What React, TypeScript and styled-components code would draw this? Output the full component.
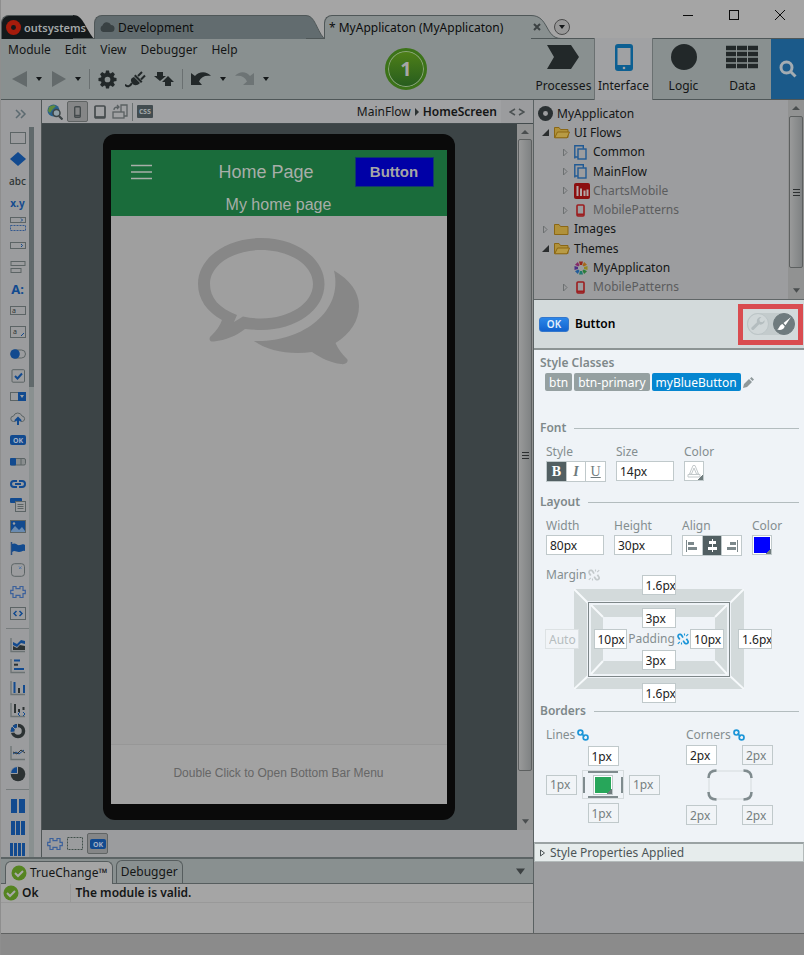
import React from "react";
import styled, { createGlobalStyle } from "styled-components";

const GlobalStyle = createGlobalStyle`
  *, *::before, *::after { box-sizing: border-box; }
  body { margin: 0; background: #8b8b8b; }
  body, button, input, table { font-family: "Noto Sans", "Open Sans", sans-serif; font-size: 12px; line-height: 16px; color: #141616; }
  button { border: 0; padding: 0; margin: 0; background: none; cursor: pointer; white-space: nowrap; }
  svg { display: block; flex: none; }
  h2, h3, ul { margin: 0; padding: 0; font-size: 12px; list-style: none; }
  h2, h3, strong { font-weight: 600; }
`;

const c = {
  title: "#a5a5a5",
  bar: "#899090",
  line: "#4f5758",
  light: "#a0a1a3",
  pane: "#9b9c9e",
  ink: "#222829",
  blue: "#124a8f",
  grey: "#5c6465",
  label: "#848e90",
  field: "#c0c9cb",
};

/* ---------- frame ---------- */
const Window = styled.div`
  min-height: 100vh;
  display: flex;
  flex-direction: column;
  border-left: 1px solid #8e8e8e;
  background: ${c.title};
`;
const TitleBar = styled.header`
  display: flex;
  align-items: flex-end;
  height: 38px;
  background: ${c.title};
`;
const Tab = styled.button<{ $bg: string; $w: number; $fg?: string }>`
  height: 24px;
  width: ${(p) => p.$w}px;
  margin-bottom: -1px;
  display: flex;
  align-items: center;
  gap: 3px;
  padding-left: 4px;
  border: 1px solid ${c.line};
  border-right: 0;
  border-bottom: 0;
  border-radius: 8px 0 0 0;
  background: ${(p) => p.$bg};
  color: ${(p) => p.$fg || "#0c0d0d"};
  position: relative;
  z-index: 1;
`;
const Cap = styled.svg`
  margin-bottom: -1px;
`;
const Brand = styled.span`
  font-weight: 600;
  font-size: 11px;
  line-height: 16px;
`;
const CloseTab = styled.button`
  width: 10px;
  height: 20px;
  margin: 0 -12px 1px 2px;
  z-index: 1;
`;
const Round = styled.button`
  width: 16px;
  height: 16px;
  margin: 0 0 3px -7px;
  border: 1px solid #4a4a4a;
  border-radius: 50%;
  background: #989898;
  display: grid;
  place-items: center;
`;
const Controls = styled.div`
  margin-left: auto;
  align-self: flex-start;
  display: flex;
  gap: 35px;
  padding: 9px 18px 0 0;
`;
const Head = styled.div`
  display: flex;
  background: ${c.bar};
  border-top: 1px solid ${c.line};
  border-bottom: 1px solid ${c.line};
  height: 62px;
  position: relative;
`;
const Commands = styled.div`
  flex: 1;
  min-width: 0;
`;
const Menu = styled.nav`
  display: flex;
  gap: 14px;
  padding: 3px 0 0 7px;
`;
const Tools = styled.div`
  display: flex;
  align-items: center;
  height: 40px;
  padding: 2px 0 0 11px;
  gap: 8px;
`;
const Sep = styled.i<{ $h: number }>`
  width: 1px;
  height: ${(p) => p.$h}px;
  background: #6a7071;
`;
const Step = styled.span`
  position: absolute;
  left: 384px;
  top: 9px;
  width: 42px;
  height: 42px;
  border-radius: 50%;
  border: 3px solid #3c7319;
  background: linear-gradient(#4f8018, #265c1e);
  box-shadow: inset 0 0 0 1px #8ba67c;
  color: #a6a6a6;
  font-weight: 700;
  font-size: 20px;
  line-height: 35px;
  text-align: center;
`;
const Areas = styled.nav`
  display: flex;
  width: 271px;
`;
const Area = styled.button<{ $on?: boolean; $w: number }>`
  width: ${(p) => p.$w}px;
  display: flex;
  flex-direction: column;
  align-items: center;
  justify-content: space-between;
  background: ${(p) => (p.$on ? c.light : "transparent")};
  margin: ${(p) => (p.$on ? "-1px 0" : "0")};
  padding-top: ${(p) => (p.$on ? 6 : 5)}px;
  padding-bottom: ${(p) => (p.$on ? 6 : 5)}px;
  border-left: ${(p) => (p.$on ? "1px solid #6a7071" : "0")};
  border-right: ${(p) => (p.$on ? "1px solid #6a7071" : "0")};
`;
const Search = styled.button`
  width: 33px;
  background: #1b5a8a;
  display: grid;
  place-items: center;
`;
const Body = styled.div`
  flex: 1;
  display: grid;
  grid-template-columns: minmax(0, 1fr) 271px;
`;
const Status = styled.footer`
  height: 22px;
  background: #8b8b8b;
  border-top: 1px solid #606262;
`;

/* ---------- left ---------- */
const Left = styled.div`
  display: flex;
  flex-direction: column;
  min-width: 0;
`;
const Workspace = styled.div`
  flex: 1;
  display: flex;
  min-height: 0;
`;
const Toolbox = styled.aside`
  width: 41px;
  display: flex;
  flex-direction: column;
  background: ${c.pane};
  border-right: 1px solid #505657;
`;
const Expand = styled.button`
  height: 27px;
  padding-left: 14px;
`;
const ToolScroll = styled.div`
  flex: 1;
  display: flex;
  overflow: hidden;
  padding-left: 5px;
`;
const ToolList = styled.div`
  width: 23px;
  display: flex;
  flex-direction: column;
  margin-bottom: -3px;
`;
const Tool = styled.button`
  flex: 1;
  min-height: 18px;
  display: grid;
  place-items: center;
`;
const Rule = styled.i`
  height: 1px;
  margin: 4px 0 5px;
  background: #777c7d;
`;
const ToolTrack = styled.div`
  width: 5px;
  background: #899090;
`;
const ToolThumb = styled.div`
  height: 260px;
  background: #60696b;
`;
const Stage = styled.div`
  flex: 1;
  min-width: 0;
  display: flex;
  flex-direction: column;
`;
const ViewBar = styled.div`
  height: 24px;
  display: flex;
  align-items: center;
  padding-left: 5px;
  gap: 4px;
  background: ${c.light};
  border-bottom: 1px solid #434b4d;
`;
const ElementBar = styled.div`
  height: 27px;
  display: flex;
  align-items: center;
  padding-left: 5px;
  gap: 4px;
  background: ${c.pane};
`;
const Toggle = styled.button<{ $on?: boolean }>`
  width: ${(p) => (p.$on ? 21 : 16)}px;
  height: 21px;
  display: grid;
  place-items: center;
  border-radius: 2px;
  border: ${(p) => (p.$on ? "1px solid #606464" : "0")};
  background: ${(p) => (p.$on ? "#858687" : "transparent")};
`;
const Crumbs = styled.div`
  margin-left: auto;
  display: flex;
  align-items: center;
  gap: 4px;
`;
const Code = styled.button`
  width: 32px;
  height: 23px;
  background: ${c.pane};
  display: grid;
  place-items: center;
`;
const Canvas = styled.div`
  flex: 1;
  display: flex;
  background: #3c4446;
`;
const Board = styled.main`
  flex: 1;
  display: flex;
  justify-content: center;
  padding: 10px 0;
`;
const Phone = styled.div`
  width: 352px;
  margin-right: 2px;
  display: flex;
  padding: 16px 8px;
  background: #0a0a0a;
  border-radius: 12px;
`;
const Screen = styled.div`
  flex: 1;
  display: flex;
  flex-direction: column;
  align-items: stretch;
  background: #9f9f9f;
  font-family: "Liberation Sans", Arial, sans-serif;
`;
const AppHead = styled.div`
  background: #1a6c3b;
  color: #a8aea9;
  height: 66px;
`;
const AppTop = styled.div`
  display: grid;
  grid-template-columns: 21px 1fr auto;
  align-items: center;
  padding: 7px 13px 0 20px;
  font-size: 18px;
  line-height: 30px;
  column-gap: 24px;
`;
const AppTitle = styled.span`
  text-align: center;
  padding-left: 26px;
`;
const AppButton = styled.button`
  justify-self: end;
  width: 79px;
  height: 30px;
  background: #0000a6;
  border: 1px solid #123a6c;
  color: #a6a6a6;
  font: bold 15px/28px "Liberation Sans", Arial, sans-serif;
`;
const AppSub = styled.div`
  text-align: center;
  font-size: 16px;
  line-height: 18px;
  margin-top: 9px;
`;
const AppBody = styled.div`
  flex: 1;
  display: flex;
  justify-content: center;
  padding-top: 22px;
`;
const AppFoot = styled.div`
  height: 60px;
  border-top: 1px solid #979797;
  background: #a2a2a2;
  color: #666;
  text-align: center;
  font-size: 12px;
  line-height: 57px;
`;
const Track = styled.div`
  width: 16px;
  display: flex;
  flex-direction: column;
  align-items: center;
  justify-content: space-between;
  background: #919292;
  padding: 6px 0;
`;
const Thumb = styled.div<{ $top: number; $bottom: number }>`
  flex: 1;
  align-self: stretch;
  margin: ${(p) => p.$top}px 1px ${(p) => p.$bottom}px;
  border: 1px solid #5d6060;
  border-radius: 2px;
  background: linear-gradient(90deg, #999a9a, #7f8283);
  display: grid;
  place-items: center;
`;
const Bottom = styled.div`
  background: ${c.bar};
  border-top: 2px solid #5c6465;
`;
const BottomTabs = styled.div`
  display: flex;
  align-items: flex-end;
  height: 25px;
  padding: 0 8px 0 4px;
  gap: 3px;
  border-bottom: 1px solid #565d5e;
`;
const BottomTab = styled.button<{ $on?: boolean }>`
  height: 23px;
  padding: 0 4px 0 ${(p) => (p.$on ? 5 : 4)}px;
  display: flex;
  align-items: center;
  gap: 3px;
  border: 1px solid #565d5e;
  border-bottom: 0;
  border-radius: 6px 6px 0 0;
  background: ${(p) => (p.$on ? c.title : c.bar)};
  margin-bottom: ${(p) => (p.$on ? -1 : 0)}px;
`;
const Collapse = styled.button`
  margin: 0 0 8px auto;
`;
const Results = styled.div`
  height: 49px;
  background: ${c.title};
`;
const Messages = styled.table`
  border-collapse: collapse;
  width: 100%;
  border-bottom: 1px solid #999;
  td { padding: 0 0 0 2px; height: 18px; font-weight: 600; }
  td + td { border-left: 1px solid #999; padding-left: 5px; }
  td:first-child { width: 69px; }
`;
const State = styled.span`
  display: flex;
  align-items: center;
  gap: 3px;
`;

/* ---------- right ---------- */
const Right = styled.div`
  display: flex;
  flex-direction: column;
  background: #9c9d9f;
  border-left: 1px solid #5a6162;
`;
const TreePane = styled.div`
  height: 199px;
  display: flex;
  background: #9c9d9f;
`;
const Tree = styled.ul`
  flex: 1;
  display: flex;
  flex-direction: column;
  padding: 4px 0 2px;
`;
const Node = styled.li<{ $depth: number; $dim?: boolean }>`
  flex: 1;
  display: flex;
  align-items: center;
  padding-left: ${(p) => [4, 8, 28][p.$depth]}px;
  color: ${(p) => (p.$dim ? "#5b5c5d" : "#141616")};
`;
const Twist = styled.button`
  width: 12px;
  height: 16px;
  display: grid;
  align-items: center;
`;
const NodeIcon = styled.span<{ $w: number }>`
  width: ${(p) => p.$w}px;
`;
const Selected = styled.div`
  height: 51px;
  display: flex;
  align-items: center;
  padding: 0 0 0 5px;
  background: #d3dadb;
  border-top: 1px solid #606667;
  border-bottom: 2px solid #8c9494;
  color: #000;
`;
const OkBadge = styled.span`
  width: 30px;
  height: 15px;
  margin-right: 6px;
  border-radius: 3px;
  background: linear-gradient(#2b86e8, #1263cf);
  border: 1px solid #3377cc;
  color: #e4effb;
  font-weight: 600;
  font-size: 10px;
  line-height: 13px;
  text-align: center;
`;
const Marked = styled.div`
  margin-left: auto;
  margin-right: 1px;
  border: 5px solid #d94c50;
  width: 65px;
  height: 41px;
  display: grid;
  place-items: center;
`;
const Mode = styled.div`
  display: flex;
  justify-content: space-between;
  width: 48px;
  border-radius: 12px;
  background: #c3cbcc;
`;
const ModeButton = styled.button<{ $on?: boolean }>`
  width: 22px;
  height: 22px;
  border-radius: 50%;
  display: grid;
  place-items: center;
  border: 1px solid ${(p) => (p.$on ? "#6f7b7e" : "#bcc5c7")};
  background: ${(p) => (p.$on ? "#6f7b7e" : "#d0d7d8")};
`;
const Styles = styled.section`
  background: #eff3f7;
  color: ${c.label};
  padding: 5px 5px 0 6px;
`;
const Heading = styled.h3<{ $line?: boolean }>`
  display: flex;
  align-items: center;
  gap: 8px;
  color: #7e888a;
  line-height: 16px;
  &::after { content: ""; flex: 1; height: 1px; background: ${(p) => (p.$line ? "#b3bcbe" : "transparent")}; }
`;
const Tags = styled.div`
  display: flex;
  align-items: center;
  gap: 2px;
  padding: 2px 0 29px 5px;
`;
const Tag = styled.button<{ $on?: boolean }>`
  height: 18px;
  padding: 0 4px;
  border-radius: 2px;
  color: #fff;
  line-height: 17px;
  background: ${(p) => (p.$on ? "#0586d0" : "#95a0a1")};
`;
const Fields = styled.div`
  display: flex;
  gap: 10px;
  padding: 8px 0 12px 6px;
`;
const Field = styled.div`
  display: flex;
  flex-direction: column;
  gap: 1px;
  color: ${c.label};
`;
const Box = styled.input<{ $w: number; $off?: boolean; $faint?: boolean }>`
  width: ${(p) => p.$w}px;
  height: 20px;
  padding: 0 0 0 3px;
  border: 1px solid ${(p) => (p.$faint ? "#dde2e4" : c.field)};
  border-radius: 0;
  background: ${(p) => (p.$off ? "#f1f4f7" : "#fff")};
  color: ${(p) => (p.$faint ? "#b6bdbf" : p.$off ? "#767f81" : "#222")};
  outline: 0;
`;
const Group = styled.div`
  display: flex;
  width: 60px;
  height: 21px;
  border: 1px solid ${c.field};
  background: #fff;
`;
const GroupButton = styled.button<{ $on?: boolean }>`
  flex: 1;
  display: grid;
  place-items: center;
  background: ${(p) => (p.$on ? "#525f62" : "#fff")};
  color: ${(p) => (p.$on ? "#fff" : "#6f7b7d")};
  & + & { border-left: 1px solid ${c.field}; }
`;
const Letter = styled.span<{ $kind: "b" | "i" | "u" }>`
  font: ${(p) => (p.$kind === "b" ? "bold" : p.$kind === "i" ? "italic bold" : "normal")} 14px/16px "Liberation Serif", serif;
  text-decoration: ${(p) => (p.$kind === "u" ? "underline" : "none")};
`;
const Swatch = styled.button<{ $color: string }>`
  width: 20px;
  height: 20px;
  border: 1px solid ${c.field};
  padding: 1px;
  background: linear-gradient(315deg, #6f7b7d 4px, transparent 4px), linear-gradient(${(p) => p.$color}, ${(p) => p.$color}) content-box, #fff;
  display: grid;
  place-items: center;
`;
const LinkLabel = styled.div`
  display: flex;
  align-items: center;
  gap: 2px;
`;
const Spacing = styled.div`
  display: grid;
  grid-template-columns: 34px 14px 34px 63px 34px 14px 34px;
  grid-template-rows: 20px 13px 20px 22px 20px 13px 20px;
  align-items: center;
  justify-items: center;
  margin: 7px 0 0 5px;
`;
const Backdrop = styled.svg`
  grid-area: 1 / 1 / -1 / -1;
`;
const Cell = styled.div<{ $row: number; $col: number }>`
  grid-row: ${(p) => p.$row};
  grid-column: ${(p) => p.$col};
  z-index: 1;
  display: flex;
  align-items: center;
  gap: 2px;
`;
const MarginLabel = styled(LinkLabel)`
  grid-row: 1;
  grid-column: 1 / span 4;
  justify-self: start;
  align-self: start;
  margin: -8px 0 0 1px;
`;
const BorderRow = styled.div`
  display: flex;
  padding: 8px 0 17px 6px;
  gap: 26px;
`;
const Lines = styled.div`
  display: grid;
  grid-template-columns: 31px 42px 31px;
  grid-template-rows: 20px 29px 20px;
  gap: 4px 5px;
  place-items: center;
  margin: 3px 0 0 0;
`;
const LineBox = styled.div`
  width: 42px;
  height: 29px;
  grid-row: 2;
  grid-column: 2;
  display: grid;
  place-items: center;
  border: 1px solid #d5dbdd;
  background:
    linear-gradient(#7f8b8e, #7f8b8e) top / 30px 2px no-repeat,
    linear-gradient(#7f8b8e, #7f8b8e) bottom / 30px 2px no-repeat,
    linear-gradient(#7f8b8e, #7f8b8e) left / 2px 16px no-repeat,
    linear-gradient(#7f8b8e, #7f8b8e) right / 2px 16px no-repeat;
`;
const Corners = styled.div`
  display: grid;
  grid-template-columns: 31px 25px 31px;
  grid-template-rows: 20px 40px 20px;
  place-items: center;
  margin-top: 2px;
`;
const Applied = styled.button`
  display: flex;
  align-items: center;
  gap: 5px;
  height: 20px;
  padding-left: 5px;
  background: #e6ecec;
  border: 1px solid #b3baba;
  border-top: 2px solid #9aa2a3;
  color: #4c5557;
`;

/* ---------- icons ---------- */
const Caret = ({ color = "#15181a", w = 6 }: { color?: string; w?: number }) => (
  <svg width={w} height={w - 2} viewBox="0 0 6 4" fill={color}><path d="M0 0h6L3 4z" /></svg>
);
const UpCaret = () => <svg width="8" height="4" viewBox="0 0 8 4" fill="#4a4e4f"><path d="M0 4h8L4 0z" /></svg>;
const Check = ({ size = 16 }: { size?: number }) => (
  <svg width={size} height={size} viewBox="0 0 16 16"><circle cx="8" cy="8" r="7.5" fill="#558421" /><path d="M4 8l3 3 5-5" fill="none" stroke="#a9a9a9" strokeWidth="2" /></svg>
);
const Gear = () => (
  <svg width="19" height="19" viewBox="-10 -10 20 20" fill={c.ink}>
    {[0, 45, 90, 135, 180, 225, 270, 315].map((a) => <path key={a} d="M-2.4 -5.5L-1.6 -9.5H1.6L2.4 -5.5z" transform={`rotate(${a})`} />)}
    <circle r="5" fill="none" stroke={c.ink} strokeWidth="4" />
  </svg>
);
const Chain = ({ broken, color = "#1b95d8" }: { broken?: boolean; color?: string }) => (
  <svg width="12" height="12" viewBox="0 0 12 12" fill="none" stroke={color} strokeWidth="1.7">
    {broken ? (
      <>
        <path d="M6 4.6L4.600 2.300A1.900 1.900 0 0 0 1.300 4.200L2.800 6.400M6.200 7.600l1.300 2.200a1.900 1.900 0 0 0 3.300-1.900L9.400 5.700" />
        <path d="M7.500.5v2M9.200 3.200l2-2M.8 10.800l2-2M4.500 9.500v2" strokeWidth="1.100" />
      </>
    ) : (
      <>
        <circle cx="3.400" cy="3.600" r="2.400" /><circle cx="8.600" cy="8.400" r="2.400" /><path d="M4.400 4.600l3.200 2.800" />
      </>
    )}
  </svg>
);
const I = ({ children, h = 16 }: { children: React.ReactNode; h?: number }) => (
  <svg width="16" height={h} viewBox={`0 0 16 ${h}`} fill="none" stroke={c.grey}>{children}</svg>
);
const Axis = () => <path d="M1 1v13.5h14" stroke="#6c7374" strokeWidth="1.3" />;
const Sign = styled.span<{ $size: number; $color: string; $bold?: boolean }>`
  font-size: ${(p) => p.$size}px;
  line-height: 16px;
  font-weight: ${(p) => (p.$bold ? 700 : 500)};
  color: ${(p) => p.$color};
`;
const Puzzle = () => (
  <svg width="16" height="14" viewBox="0 0 16 14" fill="none" stroke="#3c619b" strokeWidth="1.200">
    <path d="M3 1.500h3v2.200h4V1.500h3v3.800h2.300v3.400H13v3.800h-3v-2.200H6v2.200H3V8.700H.7V5.300H3z" />
  </svg>
);
const OkIcon = () => (
  <svg width="16" height="10" viewBox="0 0 16 10"><rect width="16" height="10" rx="2" fill={c.blue} /><text x="8" y="7.600" fontSize="7" fontWeight="700" textAnchor="middle" fill="#a2b0c4">OK</text></svg>
);
const blueFill = { fill: c.blue, stroke: "none" };
const inkFill = { fill: "#2c3233", stroke: "none" };

const tools: [string, React.ReactNode][] = [
  ["Container", <I h={12}><rect x=".5" y=".5" width="15" height="11" /></I>],
  ["If", <I h={14}><path d="M8 0l8 7-8 7-8-7z" {...blueFill} /></I>],
  ["Text", <Sign $size={10} $color="#2e3435">abc</Sign>],
  ["Expression", <Sign $size={10} $color={c.blue} $bold>x.y</Sign>],
  ["List", <I><rect x=".5" y="1.500" width="15" height="5" /><path d="M11 2.500l1.500 1.500L11 5.500" stroke={c.blue} /><rect x=".5" y="9.500" width="15" height="5" stroke="#33588f" strokeDasharray="2 1" /></I>],
  ["List Item", <I h={8}><rect x=".5" y=".5" width="15" height="6" /><path d="M11 2l1.500 1.500L11 5" stroke={c.blue} /></I>],
  ["Form", <I h={12}><rect x="1" y=".5" width="14" height="4" /><rect x="1" y="7.500" width="10" height="4" /></I>],
  ["Label", <Sign $size={13} $color={c.blue} $bold>A:</Sign>],
  ["Input", <I h={10}><rect x=".5" y=".5" width="15" height="8" /><text x="2" y="7" fontSize="7" fill="#2e3435" stroke="none">a</text></I>],
  ["Text Area", <I h={12}><rect x=".5" y=".5" width="15" height="11" /><text x="3" y="8" fontSize="7" fill="#2e3435" stroke="none">a</text><path d="M11 10l3-3" stroke={c.blue} /></I>],
  ["Switch", <I h={10}><rect x="1" y="1" width="14.500" height="8" rx="4" /><circle cx="5" cy="5" r="4.800" {...blueFill} /></I>],
  ["Checkbox", <I h={14}><rect x="2" y=".7" width="12.500" height="12.500" rx="1" /><path d="M5 7l2.500 2.500L12 4.500" stroke={c.blue} strokeWidth="2" /></I>],
  ["Dropdown", <I h={10}><rect x=".5" y=".5" width="15" height="8" /><rect x="8" width="8" height="9" {...blueFill} /><path d="M10 3h4l-2 3z" fill="#a0a1a3" stroke="none" /></I>],
  ["Upload", <I h={14}><path d="M5 9.500H3.500a2.700 2.700 0 0 1 0-5.400A4.500 4.500 0 0 1 12 4a2.800 2.800 0 0 1 .5 5.500H11" /><path d="M8 13V6M5 9l3-3 3 3" stroke={c.blue} strokeWidth="2" /></I>],
  ["Button", <OkIcon />],
  ["Button Group", <I h={8}><rect x=".5" y=".5" width="15" height="6.500" rx="1.500" fill="#898d8e" /><rect width="6" height="7.500" rx="1" {...blueFill} /><path d="M11 1v6" /></I>],
  ["Link", <I h={10}><g stroke={c.blue} strokeWidth="2"><path d="M7 2H4a3 3 0 0 0 0 6h3M9 2h3a3 3 0 0 1 0 6H9M5 5h6" /></g></I>],
  ["Popover Menu", <I h={14}><rect width="12" height="5" rx="1" {...blueFill} /><rect x="5.500" y="3.500" width="10" height="10" fill="#9b9c9e" /><path d="M7.500 6.500h6M7.500 8.500h6M7.500 10.500h6" strokeWidth="1" /></I>],
  ["Image", <I h={13}><rect x=".5" y=".5" width="15" height="12" /><rect x="1" y="1" width="14" height="11" {...blueFill} /><path d="M1 11l4-5 4 4 3-3 3 4v1H1z" fill="#6a8bb0" stroke="none" /><circle cx="4" cy="3.500" r="1.200" fill="#a0a1a3" stroke="none" /></I>],
  ["Flag", <I h={14}><path d="M1.500 1v13" stroke="#2a4f80" strokeWidth="1.500" /><path d="M2 3c4-2 5 2 8 1s4-1 5 0v6c-3-1-3 1-6 1s-4-2-7 0z" {...blueFill} /></I>],
  ["Block", <I h={14}><rect x="1.500" y=".7" width="13" height="12.600" rx="3" /><path d="M9 3.500l2.500 2.500M11.500 3.500L9 6" stroke="#5277a8" /></I>],
  ["Extension", <Puzzle />],
  ["HTML", <I h={13}><rect x=".5" y=".5" width="15" height="12" /><path d="M6.500 4L4 6.500 6.500 9M9.500 4L12 6.500 9.500 9" stroke={c.blue} strokeWidth="1.500" /></I>],
  ["-", null],
  ["Area Chart", <I><Axis /><path d="M3 13V9l4 2 3-3 5 1v4z" {...inkFill} /><path d="M3 5l4 2 4-4 4 1v3l-4-1-4 4-4-2z" {...blueFill} /></I>],
  ["Bar Chart", <I><Axis /><path d="M4 2.500h6M4 11h10" stroke={c.blue} strokeWidth="2" /><path d="M4 6.700h4" stroke="#2c3233" strokeWidth="2" /></I>],
  ["Column Chart", <I><Axis /><path d="M4.500 2v11M14 5v8" stroke={c.blue} strokeWidth="2" /><path d="M9 8v5" stroke="#2c3233" strokeWidth="2" /></I>],
  ["Custom Chart", <I><Axis /><path d="M5 2v9M9 7v3M13.500 5v3" stroke="#2c3233" strokeWidth="2" /><path d="M10 10l-2 2 2 2M13 10l2 2-2 2" stroke={c.blue} /></I>],
  ["Donut Chart", <I><circle cx="8" cy="8" r="5.500" stroke="#2c3233" strokeWidth="3.500" /><path d="M2.600 9A5.500 5.500 0 0 1 7 2.600" stroke={c.blue} strokeWidth="3.500" /><path d="M0 9.500l5-.5M7.500 0v5M2 3l3 3" stroke="#9b9c9e" /></I>],
  ["Line Chart", <I><Axis /><path d="M3 9l3-2 3 2 5-4" stroke={c.blue} /><path d="M3 7l4 2 4-4 4 3" stroke="#2c3233" /></I>],
  ["Pie Chart", <I><circle cx="8" cy="8" r="7.300" {...inkFill} /><path d="M7.500 7.500H.5A7 7 0 0 1 7.500.5z" fill={c.blue} stroke="#9b9c9e" /></I>],
  ["-", null],
  ["Columns 2", <I h={14}><path d="M1 0h6v14H1zM9 0h6v14H9z" {...blueFill} /></I>],
  ["Columns 3", <I h={14}><path d="M1 0h4v14H1zM6 0h4v14H6zM11 0h4v14h-4z" {...blueFill} /></I>],
  ["Columns 4", <I h={14}><path d="M0 1h3v13H0zM4 1h3v13H4zM8 1h3v13H8zM12 1h3v13h-3z" {...blueFill} /></I>],
];

const Ring = ({ color = "#2a3032", hole = "#9c9d9f" }: { color?: string; hole?: string }) => (
  <svg width="15" height="15" viewBox="0 0 14 14"><circle cx="7" cy="7" r="7" fill={color} /><circle cx="7" cy="7" r="2.300" fill={hole} /></svg>
);
const Folder = ({ open }: { open?: boolean }) => (
  <svg width="16" height="13" viewBox="0 0 16 13" fill="#b0913a" stroke="#8b6714">
    <path d="M.5 11.500v-10h4.500l1.500 2h7.500v8z" />
    {open && <path d="M.7 11.800L3.500 6h12l-2.500 5.800z" fill="#b89b45" />}
  </svg>
);
const Flow = () => (
  <svg width="13" height="15" viewBox="0 0 13 15" fill="#9c9d9f" stroke="#215a94" strokeWidth="1.400"><path d="M.8 13.500V.8h8.500v3M.8 12h3" /><rect x="4" y="4" width="8" height="10" /></svg>
);
const Charts = () => (
  <svg width="16" height="16" viewBox="0 0 16 16"><rect width="16" height="16" rx="2" fill="#8c0f10" /><path d="M3.500 3v10M7 5.500V13M10.500 7.500V13M13.500 6.500V13" stroke="#b4a6a6" strokeWidth="2" /></svg>
);
const Mobile = () => (
  <svg width="13" height="13" viewBox="-2 0 13 13"><rect x="1" y="1" width="7" height="11" rx="1" fill="#9c9d9f" stroke="#9c1d1f" strokeWidth="1.600" /><path d="M1 10.500h7" stroke="#9c1d1f" strokeWidth="2" /></svg>
);
const Wheel = () => (
  <svg width="14" height="14" viewBox="-7 -7 14 14">
    {["#97251c", "#a5681b", "#938a23", "#2d7c39", "#1f7a6e", "#225c99", "#4b2f86", "#862a68"].map((f, i) => (
      <path key={f} d="M-2 -6.500L2 -6.500L1 -3H-1z" fill={f} transform={`rotate(${i * 45})`} />
    ))}
  </svg>
);
const tree: { t: string; d: number; i: React.ReactNode; w: number; open?: boolean; leaf?: boolean; dim?: boolean }[] = [
  { t: "MyApplicaton", d: 0, i: <Ring />, w: 19, leaf: true },
  { t: "UI Flows", d: 1, i: <Folder open />, w: 20, open: true },
  { t: "Common", d: 2, i: <Flow />, w: 19 },
  { t: "MainFlow", d: 2, i: <Flow />, w: 19 },
  { t: "ChartsMobile", d: 2, i: <Charts />, w: 19, dim: true },
  { t: "MobilePatterns", d: 2, i: <Mobile />, w: 19, dim: true },
  { t: "Images", d: 1, i: <Folder />, w: 20 },
  { t: "Themes", d: 1, i: <Folder open />, w: 20, open: true },
  { t: "MyApplicaton", d: 2, i: <Wheel />, w: 19, leaf: true },
  { t: "MobilePatterns", d: 2, i: <Mobile />, w: 19, dim: true },
];

function TitleRow() {
  return (
    <TitleBar>
      <Tab $bg="#14191b" $w={72} $fg="#a3a8a9"><Ring color="#a51c0c" hole="#14191b" /><Brand>outsystems</Brand></Tab>
      <Cap width="21" height="24" viewBox="0 0 21 24"><path d="M0 0C10 0 11 11 21 24H0z" fill="#14191b" /></Cap>
      <Tab $bg="#626c6f" $w={212}>
        <svg width="16" height="11" viewBox="0 0 16 11" fill="#394143"><path d="M4 10a3.500 3.500 0 0 1-.5-6.500A4.500 4.500 0 0 1 12 3a3.500 3.500 0 0 1 0 7z" /></svg>
        Development
      </Tab>
      <Cap width="18" height="24" viewBox="0 0 18 24"><path d="M0 .5C9 .5 10 14 18 23.500H0z" fill="#626c6f" /><path d="M0 .5C9 .5 10 14 18 23.500" fill="none" stroke={c.line} /></Cap>
      <Tab $bg={c.bar} $w={207}>* MyApplicaton (MyApplicaton)</Tab>
      <CloseTab aria-label="Close tab"><svg width="8" height="8" viewBox="0 0 8 8" stroke="#3c4243" strokeWidth="2"><path d="M1 1l6 6M7 1L1 7" /></svg></CloseTab>
      <Cap width="30" height="24" viewBox="0 0 30 24"><path d="M0 .5C18 .5 14 23.500 30 23.500H0z" fill={c.bar} /><path d="M0 .5C18 .5 14 23.500 30 23.500" fill="none" stroke={c.line} /></Cap>
      <Round aria-label="Open modules"><Caret /></Round>
      <Controls>
        <button aria-label="Minimize"><svg width="12" height="12" viewBox="0 0 12 12" stroke="#0b0b0b"><path d="M1 6.500h10" /></svg></button>
        <button aria-label="Maximize"><svg width="10" height="12" viewBox="0 0 10 12" fill="none" stroke="#0b0b0b"><rect x=".5" y="1.500" width="9" height="9" /></svg></button>
        <button aria-label="Close"><svg width="12" height="12" viewBox="0 0 12 12" stroke="#0b0b0b"><path d="M1 1l10 10M11 1L1 11" /></svg></button>
      </Controls>
    </TitleBar>
  );
}

function Header() {
  return (
    <Head>
      <Commands>
        <Menu>{["Module", "Edit", "View", "Debugger", "Help"].map((m) => <button key={m}>{m}</button>)}</Menu>
        <Tools>
          <button aria-label="Back"><svg width="16" height="18" viewBox="0 0 16 18" fill="#636a6b"><path d="M0 9L15 1v16z" /></svg></button>
          <button aria-label="Back history"><Caret /></button>
          <button aria-label="Forward"><svg width="17" height="18" viewBox="0 0 17 18" fill="#636a6b"><path d="M16 9L2 1v16z" /></svg></button>
          <button aria-label="Forward history"><Caret /></button>
          <Sep $h={20} />
          <button aria-label="Settings"><Gear /></button>
          <button aria-label="Connect"><svg width="21" height="18" viewBox="0 0 21 18" fill={c.ink}><path d="M9 7l6 6c-3 3-6 3-8 0s-1-5 2-6zM9 6l1.500-1.500 7 7L16 13z" /><path d="M13 6l4-4M16 9.500l4-4M7 13c-2 4-5 4-7 1.500" stroke={c.ink} strokeWidth="2" fill="none" /></svg></button>
          <button aria-label="Merge"><svg width="20" height="16" viewBox="0 0 20 16" fill={c.ink}><path d="M3 1h6v4h3L6 10 0 5h3zM11 15v-4H8l6-6 6 6h-3v4z" /></svg></button>
          <Sep $h={20} />
          <button aria-label="Undo"><svg width="21" height="16" viewBox="0 0 21 16" fill={c.ink}><path d="M0 2v12h11L8 10.500C10 6 14 4 20 5 15-1 7 1 4 5z" /></svg></button>
          <button aria-label="Undo history"><Caret /></button>
          <button aria-label="Redo"><svg width="21" height="16" viewBox="0 0 21 16" fill="#6d7475"><path d="M20 2v12H9l4-3.500C11 6 7 4 1 5 6-1 13 1 16 5z" /></svg></button>
          <button aria-label="Redo history"><Caret /></button>
        </Tools>
      </Commands>
      <Step>1</Step>
      <Areas>
        <Area $w={61}><svg width="33" height="26" viewBox="0 0 33 26" fill={c.ink}><path d="M0 1h24l8 12-8 12H0l7-12z" /></svg>Processes</Area>
        <Area $w={59} $on><svg width="18" height="27" viewBox="0 0 18 27"><rect width="18" height="27" rx="3" fill="#0c5f92" /><rect x="2.500" y="4" width="13" height="17" fill={c.light} /><circle cx="9" cy="24" r="1.300" fill={c.light} /></svg>Interface</Area>
        <Area $w={61}><svg width="26" height="26" viewBox="0 0 26 26" fill={c.ink}><circle cx="13" cy="13" r="13" /></svg>Logic</Area>
        <Area $w={57}><svg width="33" height="26" viewBox="0 0 33 26" stroke={c.ink} strokeWidth="4.500"><path d="M0 4h10M11 4h10M22 4h10M0 10h10M11 10h10M22 10h10M0 16h10M11 16h10M22 16h10M0 22h10M11 22h10M22 22h10" /></svg>Data</Area>
        <Search aria-label="Search"><svg width="18" height="18" viewBox="0 0 18 18" fill="none" stroke="#a4acb2" strokeWidth="3"><circle cx="7.500" cy="7.500" r="5.500" /><path d="M11.500 11.500l5 5" /></svg></Search>
      </Areas>
    </Head>
  );
}

function ToolboxPane() {
  return (
    <Toolbox>
      <Expand aria-label="Expand toolbox"><svg width="12" height="10" viewBox="0 0 12 10" fill="none" stroke="#5c6a70" strokeWidth="1.500"><path d="M1 1l4 4-4 4M6 1l4 4-4 4" /></svg></Expand>
      <ToolScroll>
        <ToolList>{tools.map(([name, icon], i) => (name === "-" ? <Rule key={i} /> : <Tool key={i} aria-label={name}>{icon}</Tool>))}</ToolList>
        <ToolTrack><ToolThumb /></ToolTrack>
      </ToolScroll>
    </Toolbox>
  );
}

function Preview() {
  return (
    <Phone>
      <Screen>
        <AppHead>
          <AppTop>
            <svg width="21" height="16" viewBox="0 0 21 16" stroke="#a8aea9" strokeWidth="1.600"><path d="M0 1.500h21M0 8h21M0 14.500h21" /></svg>
            <AppTitle>Home Page</AppTitle>
            <AppButton>Button</AppButton>
          </AppTop>
          <AppSub>My home page</AppSub>
        </AppHead>
        <AppBody>
          <svg width="161" height="127" viewBox="198 238 161 127" fill="#878787">
            <path fillRule="evenodd" d="M261 238C296 238 324.500 258 324.500 284C324.500 310 296 330 261.500 330C256 330 250 329.500 245 329C236 336 226 340 214 341.500C209 342 208 338 212 335C216 331 220 326 222 320C207 312 198 299 198 284C198 258 226 238 261 238ZM261 250C233 250 210 265 210 284C210 298 219 308 237 315L234 322L243 316.500C249 318 255 318.500 261 318.500C290 318.500 313 303 313 284C313 265 290 250 261 250Z" />
            <path d="M334 270.500C350 280 359 292 359 306C359 321 350 334 335.500 343C338 349 342 354 346 358C350 361 346 365 341 364C331 363 321 358 312 352C290 355 268 351 254 341C300 343 344 313 334 270.500Z" />
          </svg>
        </AppBody>
        <AppFoot>Double Click to Open Bottom Bar Menu</AppFoot>
      </Screen>
    </Phone>
  );
}

const Grip = () => <svg width="7" height="7" viewBox="0 0 7 7" stroke="#2c2f30"><path d="M0 .5h7M0 3.500h7M0 6.500h7" /></svg>;

function StylePanel() {
  return (
    <>
      <Selected>
        <OkBadge>OK</OkBadge>
        <h2>Button</h2>
        <Marked>
          <Mode>
            <ModeButton aria-label="Properties"><svg width="16" height="16" viewBox="0 0 24 24" fill="#b4bdbf"><path d="M22 6.500a6 6 0 0 1-8.200 6L6 20.300a2.300 2.300 0 0 1-3.300-3.300L10.500 9.200A6 6 0 0 1 17 1.500l-3 3.500 1 3.500 3.500 1z" /></svg></ModeButton>
            <ModeButton aria-label="Styles" $on><svg width="16" height="16" viewBox="0 0 16 16" fill="#fff"><path d="M15 1L7.500 7l2 2.200zM6.500 8l2.200 2.300C8 14 4 14.500 1 13.500 3.500 13 3 9 6.500 8z" /></svg></ModeButton>
          </Mode>
        </Marked>
      </Selected>
      <Styles>
        <Heading>Style Classes</Heading>
        <Tags>
          <Tag>btn</Tag><Tag>btn-primary</Tag><Tag $on>myBlueButton</Tag>
          <button aria-label="Edit classes"><svg width="11" height="11" viewBox="0 0 11 11" fill="#8f999b"><path d="M0 11l1-4 5-5 3 3-5 5zM7 1.500L8.500 0 11 2.500 9.500 4z" /></svg></button>
        </Tags>
        <Heading $line>Font</Heading>
        <Fields>
          <Field><span>Style</span>
            <Group>
              <GroupButton $on aria-label="Bold"><Letter $kind="b">B</Letter></GroupButton>
              <GroupButton aria-label="Italic"><Letter $kind="i">I</Letter></GroupButton>
              <GroupButton aria-label="Underline"><Letter $kind="u">U</Letter></GroupButton>
            </Group>
          </Field>
          <Field><label htmlFor="size">Size</label><Box id="size" $w={58} defaultValue="14px" /></Field>
          <Field><span>Color</span><Swatch $color="#fff" aria-label="Font color"><svg width="14" height="14" viewBox="0 0 14 14" fill="none" stroke="#c3c9cb"><path d="M2.500 10L6 1.500h2L11.500 10h-2L7 4l-2.500 6zM1 10.500h12v2.500H1z" /></svg></Swatch></Field>
        </Fields>
        <Heading $line>Layout</Heading>
        <Fields>
          <Field><label htmlFor="w">Width</label><Box id="w" $w={58} defaultValue="80px" /></Field>
          <Field><label htmlFor="h">Height</label><Box id="h" $w={58} defaultValue="30px" /></Field>
          <Field><span>Align</span>
            <Group>
              <GroupButton aria-label="Align left"><svg width="12" height="12" viewBox="0 0 12 12" fill="#7c888b"><path d="M0 0h1v12H0zM2 2h6v3H2zM2 7h9v3H2z" /></svg></GroupButton>
              <GroupButton $on aria-label="Align center"><svg width="11" height="13" viewBox="0 0 11 13" fill="#fff"><path d="M5 0h1v13H5zM2 2h7v3H2zM1 8h9v3H1z" /></svg></GroupButton>
              <GroupButton aria-label="Align right"><svg width="12" height="12" viewBox="0 0 12 12" fill="#7c888b"><path d="M11 0h1v12h-1zM4 2h6v3H4zM1 7h9v3H1z" /></svg></GroupButton>
            </Group>
          </Field>
          <Field><span>Color</span><Swatch $color="#0000ff" aria-label="Background color" /></Field>
        </Fields>
        <Spacing>
          <MarginLabel>Margin <Chain broken color="#c3c9cb" /></MarginLabel>
          <Backdrop width="170" height="100" viewBox="0 0 170 100">
            <rect width="170" height="100" fill="#d3dadb" />
            <path d="M0 0l14 14M170 0l-14 14M0 100l14-13M170 100l-14-13" stroke="#f6f9fb" strokeWidth="2" />
            <rect x="13" y="12" width="144" height="77" fill="#eff3f7" />
            <rect x="14.500" y="13.500" width="141" height="74" fill="#eff3f7" stroke="#7d8688" />
            <rect x="17" y="16" width="136" height="69" fill="#d3dadb" />
            <rect x="29" y="28" width="112" height="44" fill="#eff3f7" />
            <path d="M17 16l12 12M153 16l-12 12M17 85l12-13M153 85l-12-13" stroke="#f6f9fb" strokeWidth="2" />
          </Backdrop>
          <Cell $row={1} $col={4}><Box $w={34} aria-label="Margin top" defaultValue="1.6px" /></Cell>
          <Cell $row={3} $col={4}><Box $w={34} aria-label="Padding top" defaultValue="3px" /></Cell>
          <Cell $row={4} $col={1}><Box $w={34} $off $faint aria-label="Margin left" defaultValue="Auto" /></Cell>
          <Cell $row={4} $col={3}><Box $w={33} aria-label="Padding left" defaultValue="10px" /></Cell>
          <Cell $row={4} $col={4}>Padding <Chain broken /></Cell>
          <Cell $row={4} $col={5}><Box $w={34} aria-label="Padding right" defaultValue="10px" /></Cell>
          <Cell $row={4} $col={7}><Box $w={34} aria-label="Margin right" defaultValue="1.6px" /></Cell>
          <Cell $row={5} $col={4}><Box $w={34} aria-label="Padding bottom" defaultValue="3px" /></Cell>
          <Cell $row={7} $col={4}><Box $w={34} aria-label="Margin bottom" defaultValue="1.6px" /></Cell>
        </Spacing>
        <Heading $line>Borders</Heading>
        <BorderRow>
          <div>
            <LinkLabel>Lines <Chain /></LinkLabel>
            <Lines>
              <Cell $row={1} $col={2}><Box $w={31} aria-label="Top line" defaultValue="1px" /></Cell>
              <Cell $row={2} $col={1}><Box $w={31} $off aria-label="Left line" defaultValue="1px" /></Cell>
              <LineBox><Swatch $color="#27a65a" aria-label="Line color" /></LineBox>
              <Cell $row={2} $col={3}><Box $w={31} $off aria-label="Right line" defaultValue="1px" /></Cell>
              <Cell $row={3} $col={2}><Box $w={31} $off aria-label="Bottom line" defaultValue="1px" /></Cell>
            </Lines>
          </div>
          <div>
            <LinkLabel>Corners <Chain /></LinkLabel>
            <Corners>
              <Backdrop width="46" height="32" viewBox="0 0 46 32" fill="none">
                <rect x="2" y="2" width="42" height="28" rx="8" stroke="#d5dbdd" />
                <path d="M1.500 9q0-7.500 8-7.500M44.500 9q0-7.500-8-7.500M1.500 23q0 7.500 8 7.500M44.500 23q0 7.500-8 7.500" stroke="#7f8b8e" strokeWidth="2.500" />
              </Backdrop>
              <Cell $row={1} $col={1}><Box $w={31} aria-label="Top left corner" defaultValue="2px" /></Cell>
              <Cell $row={1} $col={3}><Box $w={31} $off aria-label="Top right corner" defaultValue="2px" /></Cell>
              <Cell $row={3} $col={1}><Box $w={31} $off aria-label="Bottom left corner" defaultValue="2px" /></Cell>
              <Cell $row={3} $col={3}><Box $w={31} $off aria-label="Bottom right corner" defaultValue="2px" /></Cell>
            </Corners>
          </div>
        </BorderRow>
      </Styles>
      <Applied><svg width="5" height="8" viewBox="0 0 5 8" fill="none" stroke="#4c5557"><path d="M.5 1v6l4-3z" /></svg>Style Properties Applied</Applied>
    </>
  );
}

export default function App() {
  return (
    <Window>
      <GlobalStyle />
      <TitleRow />
      <Header />
      <Body>
        <Left>
          <Workspace>
            <ToolboxPane />
            <Stage>
              <ViewBar>
                <Toggle aria-label="Preview in browser"><svg width="16" height="16" viewBox="0 0 16 16"><circle cx="6.500" cy="6.500" r="6" fill="#28608c" /><path d="M2 3q4-3 7-1L5 6 3 9 1 7zM7 8l3-2 2 3-4 3z" fill="#5f8a3c" /><circle cx="9.500" cy="9" r="3.500" fill="#8fa0a8" stroke="#3c4446" strokeWidth="1.500" /><path d="M12 12l3.500 3.500" stroke="#3c4446" strokeWidth="2.200" /></svg></Toggle>
                <Toggle $on aria-label="Phone"><svg width="7" height="12" viewBox="0 0 7 12" fill="none" stroke="#454b4d" strokeWidth="1.400"><rect x=".7" y=".7" width="5.600" height="10.600" rx="1" /><path d="M1 9.500h5" /></svg></Toggle>
                <Toggle aria-label="Tablet"><svg width="12" height="14" viewBox="0 0 12 14" fill="none" stroke="#454b4d" strokeWidth="1.700"><rect x="1" y="1" width="10" height="12" rx="1" /><path d="M1 12h10" /></svg></Toggle>
                <Toggle aria-label="Rotate"><svg width="16" height="15" viewBox="0 0 16 15" fill="none" stroke="#5a6062" strokeWidth="1.300"><rect x="1" y="8" width="11" height="6" /><path d="M9 8V1h6v11h-3M2 6q0-3 4-3M5 1l2 2-2 2" /></svg></Toggle>
                <Sep $h={18} />
                <Toggle aria-label="CSS"><svg width="16" height="13" viewBox="0 0 16 13"><rect width="16" height="13" rx="1" fill="#424c50" /><text x="8" y="9" fontSize="8" fontWeight="700" textAnchor="middle" fill="#9ba0a2">css</text></svg></Toggle>
                <Crumbs><span>MainFlow</span><svg width="4" height="8" viewBox="0 0 4 8" fill="#2c3233"><path d="M0 0v8l4-4z" /></svg><strong>HomeScreen</strong>
                  <Code aria-label="Source"><svg width="16" height="8" viewBox="0 0 16 8" fill="none" stroke="#4c5253" strokeWidth="1.500"><path d="M6 1L1 4l5 3M10 1l5 3-5 3" /></svg></Code>
                </Crumbs>
              </ViewBar>
              <Canvas>
                <Board><Preview /></Board>
                <Track><UpCaret /><Thumb $top={5} $bottom={48}><Grip /></Thumb><Caret color="#4a4e4f" w={7} /></Track>
              </Canvas>
              <ElementBar>
                <Toggle aria-label="Screen"><Puzzle /></Toggle>
                <Toggle aria-label="Container"><svg width="16" height="13" viewBox="0 0 16 13" fill="none" stroke="#41504b"><rect x=".5" y=".5" width="15" height="12" strokeDasharray="2 1" /></svg></Toggle>
                <Toggle $on aria-label="Button"><OkIcon /></Toggle>
              </ElementBar>
            </Stage>
          </Workspace>
          <Bottom>
            <BottomTabs>
              <BottomTab $on><Check />TrueChange™</BottomTab>
              <BottomTab>Debugger</BottomTab>
              <Collapse aria-label="Collapse"><Caret color="#3c4142" w={9} /></Collapse>
            </BottomTabs>
            <Results>
              <Messages><tbody><tr><td><State><Check />Ok</State></td><td>The module is valid.</td></tr></tbody></Messages>
            </Results>
          </Bottom>
        </Left>
        <Right>
          <TreePane>
            <Tree>
              {tree.map((n, i) => (
                <Node key={i} $depth={n.d} $dim={n.dim}>
                  {n.d > 0 && (n.leaf ? <NodeIcon $w={12} /> : (
                    <Twist aria-label={`Toggle ${n.t}`}>
                      {n.open ? <svg width="7" height="7" viewBox="0 0 7 7" fill="#2a2d2e"><path d="M7 0v7H0z" /></svg> : <svg width="6" height="9" viewBox="0 0 6 9" fill="none" stroke="#6c7071"><path d="M1.500 1v7L5 4.500z" /></svg>}
                    </Twist>
                  ))}
                  <NodeIcon $w={n.w}>{n.i}</NodeIcon>
                  {n.t}
                </Node>
              ))}
            </Tree>
            <Track><UpCaret /><Thumb $top={6} $bottom={20}><Grip /></Thumb><Caret color="#4a4e4f" w={7} /></Track>
          </TreePane>
          <StylePanel />
        </Right>
      </Body>
      <Status />
    </Window>
  );
}
